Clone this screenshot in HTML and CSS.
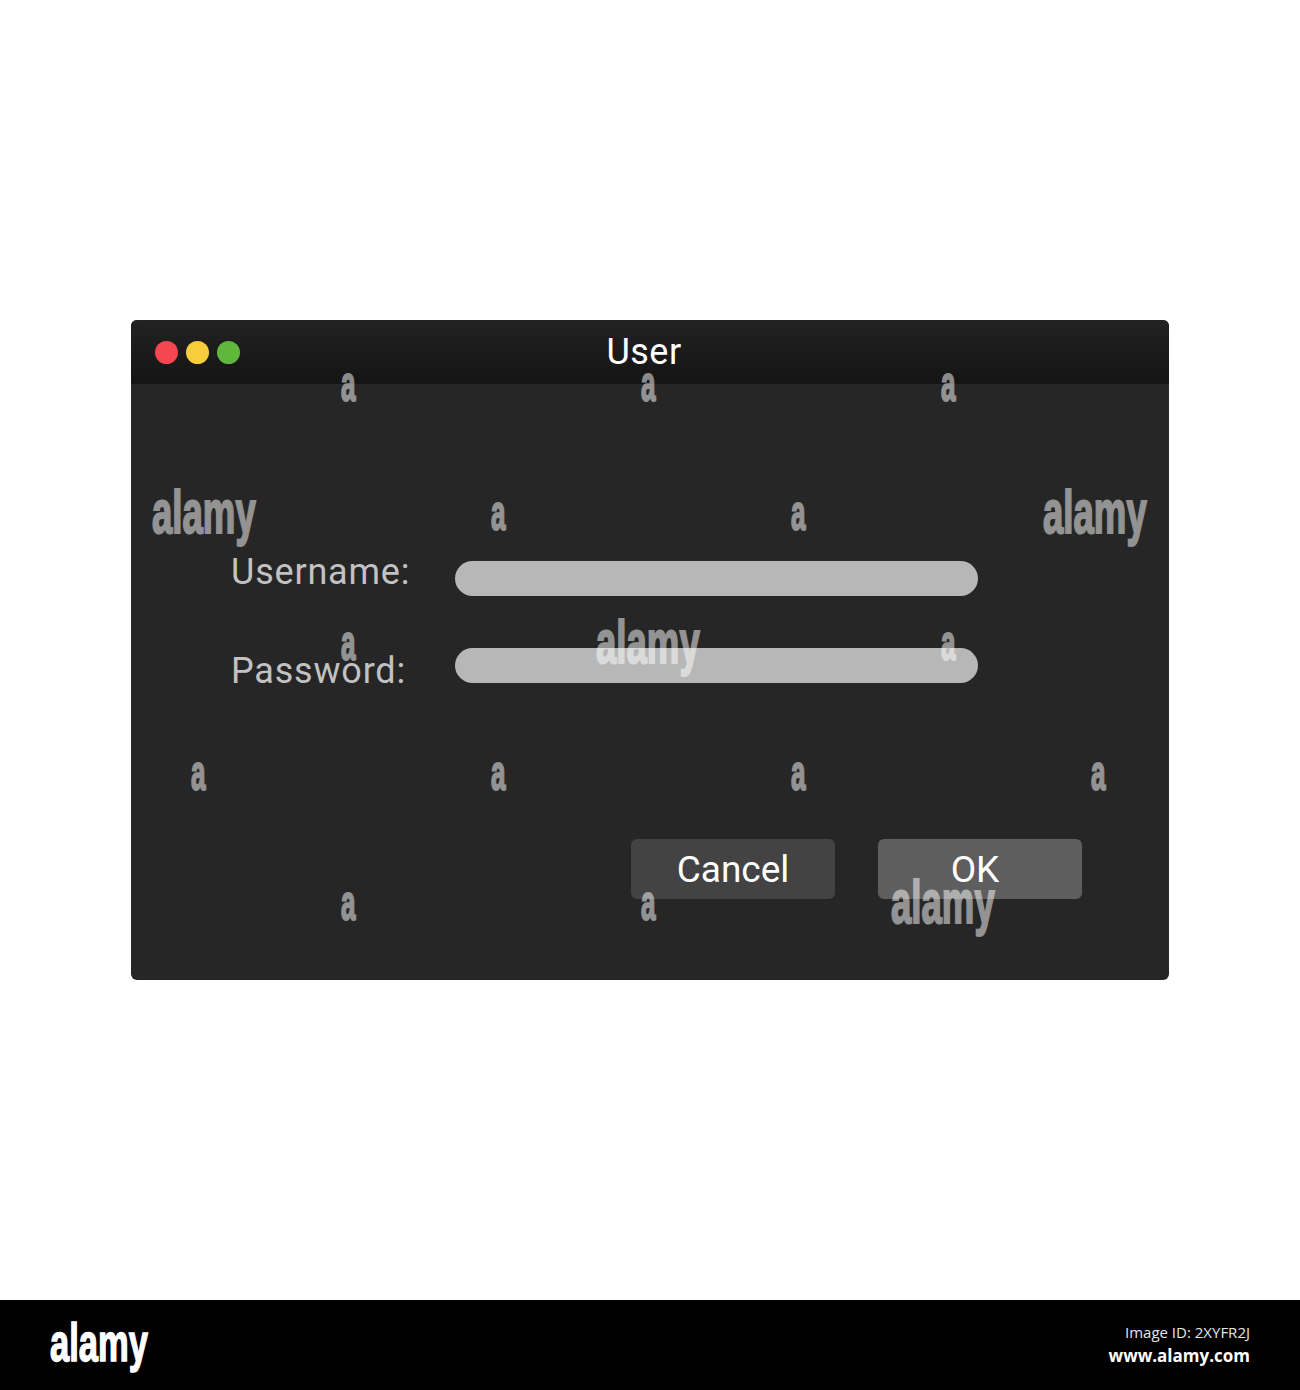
FILE: index.html
```html
<!DOCTYPE html>
<html lang="en">
<head>
    <meta charset="UTF-8">
    <meta name="viewport" content="width=device-width, initial-scale=1.0">
    <title>User</title>
    <link rel="stylesheet" href="styles.css">
</head>
<body>
    <div class="stage">
        <div class="window">
            <div class="titlebar">
                <div class="lights">
                    <span class="light red"></span>
                    <span class="light yellow"></span>
                    <span class="light green"></span>
                </div>
                <div class="title">User</div>
            </div>
            <div class="window-body">
                <div class="login-form">
                    <div class="labels">
                        <label for="username">Username:</label>
                        <label for="password" class="pw-label">Password:</label>
                    </div>
                    <div class="fields">
                        <input type="text" id="username">
                        <input type="password" id="password">
                    </div>
                </div>
                <div class="buttons">
                    <button class="btn btn-cancel">Cancel</button>
                    <button class="btn btn-ok">OK</button>
                </div>
            </div>
        </div>
    </div>
    <footer class="stock-bar">
        <div class="stock-logo">alamy</div>
        <div class="stock-info">
            <div class="stock-id">Image ID: 2XYFR2J</div>
            <div class="stock-url">www.alamy.com</div>
        </div>
    </footer>

    <!-- watermark overlay -->
    <div class="marks">
        <span class="mark" style="left:341px;top:359px">a</span>
        <span class="mark" style="left:641px;top:359px">a</span>
        <span class="mark" style="left:941px;top:359px">a</span>
        <span class="mark word" style="left:152px;top:481px">alamy</span>
        <span class="mark" style="left:491px;top:488px">a</span>
        <span class="mark" style="left:791px;top:488px">a</span>
        <span class="mark word" style="left:1043px;top:481px">alamy</span>
        <span class="mark" style="left:341px;top:618px">a</span>
        <span class="mark word" style="left:596px;top:611px">alamy</span>
        <span class="mark" style="left:941px;top:618px">a</span>
        <span class="mark" style="left:191px;top:748px">a</span>
        <span class="mark" style="left:491px;top:748px">a</span>
        <span class="mark" style="left:791px;top:748px">a</span>
        <span class="mark" style="left:1091px;top:748px">a</span>
        <span class="mark" style="left:341px;top:878px">a</span>
        <span class="mark" style="left:641px;top:878px">a</span>
        <span class="mark word" style="left:891px;top:871px">alamy</span>
    </div>
</body>
</html>
```

FILE: styles.css
```css
body {
    margin: 0;
    padding: 0;
    background: #fff;
    font-family: Roboto, "Liberation Sans", sans-serif;
    position: relative;
}
.stage {
    height: 1300px;
    display: flex;
    align-items: center;
    justify-content: center;
}
.window {
    width: 1038px;
    height: 660px;
    background: #262626;
    border-radius: 6px;
    overflow: hidden;
    display: flex;
    flex-direction: column;
}
.titlebar {
    height: 64px;
    background: linear-gradient(#222222, #141414);
    position: relative;
    display: flex;
    align-items: center;
    justify-content: center;
}
.lights {
    position: absolute;
    left: 24px;
    top: 21px;
    display: flex;
    gap: 8px;
}
.light {
    width: 23px;
    height: 23px;
    border-radius: 50%;
}
.light.red { background: #f5474f; }
.light.yellow { background: #f7cd3d; }
.light.green { background: #5fb83c; }
.title {
    color: #fff;
    font-size: 36px;
    letter-spacing: 0.5px;
    line-height: 64px;
    margin: -1px 12px 0 0;
}
.window-body {
    flex: 1;
    padding: 171px 87px 81px 100px;
    display: flex;
    flex-direction: column;
}
.login-form {
    display: flex;
    height: 134px;
}
.labels {
    width: 224px;
    display: flex;
    flex-direction: column;
    gap: 64px;
}
.labels label {
    color: #c2c2c2;
    font-size: 36px;
    letter-spacing: 0.8px;
    line-height: 35px;
    height: 35px;
}
.fields {
    padding-top: 6px;
    display: flex;
    flex-direction: column;
    gap: 52px;
}
.fields input {
    width: 523px;
    height: 35px;
    box-sizing: border-box;
    border: none;
    border-radius: 18px;
    background: #b7b7b7;
    outline: none;
}
.buttons {
    margin-top: 150px;
    display: flex;
    justify-content: flex-end;
    gap: 43px;
}
.btn {
    width: 204px;
    height: 60px;
    border: none;
    border-radius: 6px;
    color: #fff;
    font-family: Roboto, "Liberation Sans", sans-serif;
    font-size: 37px;
    padding: 0;
}
.btn-cancel { background: #434343; }
.btn-ok {
    background: #5e5e5e;
    padding-right: 10px;
}

.stock-bar {
    height: 90px;
    background: #000;
    display: flex;
    align-items: center;
    justify-content: space-between;
    padding: 0 50px;
}
.stock-logo {
    color: #fff;
    font-family: "Liberation Sans", sans-serif;
    font-weight: bold;
    font-size: 54px;
    line-height: 54px;
    margin-top: -6px;
    -webkit-text-stroke: 1.5px #fff;
    transform: scaleX(0.64);
    transform-origin: left center;
}
.stock-info {
    text-align: right;
    font-family: "Open Sans", "DejaVu Sans", sans-serif;
    color: #e6e6e6;
}
.stock-id {
    font-size: 15px;
    line-height: 22px;
}
.stock-url {
    font-size: 17px;
    font-weight: bold;
    color: #fff;
    line-height: 26px;
}

/* tiled stock marks, drawn over the window */
.marks {
    position: absolute;
    left: 0;
    top: 0;
    pointer-events: none;
}
.mark {
    position: absolute;
    color: #fff;
    -webkit-text-stroke: 2px #fff;
    opacity: 0.5;
    font-family: "Liberation Sans", sans-serif;
    font-weight: bold;
    font-size: 50px;
    line-height: 50px;
    transform: scaleX(0.52);
    transform-origin: left top;
}
.mark.word {
    font-size: 62px;
    line-height: 62px;
    transform: scaleX(0.59);
}
```
